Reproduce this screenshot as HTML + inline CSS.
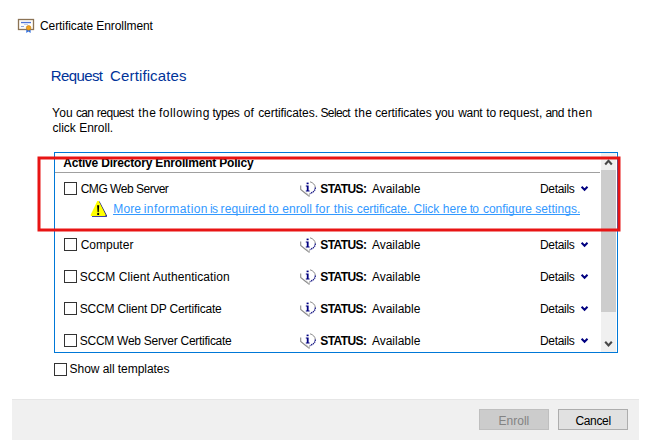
<!DOCTYPE html>
<html><head><meta charset="utf-8">
<style>
html,body{margin:0;padding:0;background:#fff;}
body{width:646px;height:444px;position:relative;overflow:hidden;font-family:"Liberation Sans",sans-serif;font-size:12px;color:#000;}
.t{position:absolute;white-space:nowrap;line-height:14px;}
.abs{position:absolute;}
.cb{position:absolute;width:11px;height:11px;border:1px solid #333;background:#fff;}
</style></head><body>
<!-- title icon -->
<svg class="abs" style="left:17px;top:17px" width="18" height="17" viewBox="0 0 18 17">
 <rect x="1.5" y="2.5" width="15" height="10" fill="#fffdf8" stroke="#8b7355" stroke-width="1.3"/>
 <rect x="4" y="4.9" width="10" height="1.3" fill="#4f74d6"/>
 <rect x="7" y="7" width="4" height="1" fill="#c5d0ea"/>
 <rect x="4" y="9" width="3" height="1" fill="#8fa6dc"/>
 <path d="M9.3 12 L9.3 16 L11.3 14.6 L13.6 16 L13.6 12Z" fill="#2f6fe0"/>
 <circle cx="11.6" cy="10.9" r="2.3" fill="#f2a31c" stroke="#c87f14" stroke-width="0.7"/>
</svg>
<!-- list box -->
<div class="abs" style="left:54px;top:152px;width:562px;height:199px;border:1px solid #0078d7;background:#fff;"></div>
<div class="abs" style="left:601px;top:153px;width:15px;height:199px;background:#f0f0f0;"></div>
<div class="abs" style="left:601px;top:170px;width:15px;height:142px;background:#cdcdcd;"></div>
<svg class="abs" style="left:601px;top:153px" width="15" height="199" viewBox="601 153 15 199">
<path d="M605.2 164.5 L608.5 160.8 L611.8 164.5" fill="none" stroke="#484848" stroke-width="2.1"/>
<path d="M605.2 341.7 L608.5 345.4 L611.8 341.7" fill="none" stroke="#484848" stroke-width="2.1"/>
</svg>
<div class="abs" style="left:55px;top:172px;width:545px;height:1px;background:#a0a0a0;"></div>
<div class="cb" style="left:64px;top:182px;"></div>
<svg class="abs" style="left:300px;top:181px" width="17" height="17" viewBox="0 0 17 17">
 <path d="M0.7 4.5 L0.7 8.5 L5 12 L9.3 15.3" fill="none" stroke="#8c8c8c" stroke-width="1.1"/>
 <path d="M10 0.8 C13 1.5 15.3 4 15.3 6.5" fill="none" stroke="#8c8c8c" stroke-width="1"/>
 <path d="M15.3 6.5 C15.3 9.5 13 11.5 10 12.5" fill="none" stroke="#101080" stroke-width="1.4" stroke-dasharray="1.3 0.7"/>
 <path d="M6 11.5 L9.5 15.5 L9.5 12" fill="none" stroke="#b0b0b0" stroke-width="0.8"/>
 <rect x="6.6" y="1.6" width="2" height="1.6" fill="#000080"/>
 <path d="M5.8 4.6 H8.6 V9.6 H9.6 V10.6 H5.8 V9.6 H6.8 V5.6 H5.8Z" fill="#000080"/>
</svg>
<svg class="abs" style="left:580px;top:186px" width="9" height="6" viewBox="0 0 9 6"><path d="M1.6 0.8 L4.55 3.8 L7.5 0.8" fill="none" stroke="#000080" stroke-width="2"/></svg>
<div class="cb" style="left:64px;top:238px;"></div>
<svg class="abs" style="left:300px;top:237px" width="17" height="17" viewBox="0 0 17 17">
 <path d="M0.7 4.5 L0.7 8.5 L5 12 L9.3 15.3" fill="none" stroke="#8c8c8c" stroke-width="1.1"/>
 <path d="M10 0.8 C13 1.5 15.3 4 15.3 6.5" fill="none" stroke="#8c8c8c" stroke-width="1"/>
 <path d="M15.3 6.5 C15.3 9.5 13 11.5 10 12.5" fill="none" stroke="#101080" stroke-width="1.4" stroke-dasharray="1.3 0.7"/>
 <path d="M6 11.5 L9.5 15.5 L9.5 12" fill="none" stroke="#b0b0b0" stroke-width="0.8"/>
 <rect x="6.6" y="1.6" width="2" height="1.6" fill="#000080"/>
 <path d="M5.8 4.6 H8.6 V9.6 H9.6 V10.6 H5.8 V9.6 H6.8 V5.6 H5.8Z" fill="#000080"/>
</svg>
<svg class="abs" style="left:580px;top:242px" width="9" height="6" viewBox="0 0 9 6"><path d="M1.6 0.8 L4.55 3.8 L7.5 0.8" fill="none" stroke="#000080" stroke-width="2"/></svg>
<div class="cb" style="left:64px;top:270px;"></div>
<svg class="abs" style="left:300px;top:269px" width="17" height="17" viewBox="0 0 17 17">
 <path d="M0.7 4.5 L0.7 8.5 L5 12 L9.3 15.3" fill="none" stroke="#8c8c8c" stroke-width="1.1"/>
 <path d="M10 0.8 C13 1.5 15.3 4 15.3 6.5" fill="none" stroke="#8c8c8c" stroke-width="1"/>
 <path d="M15.3 6.5 C15.3 9.5 13 11.5 10 12.5" fill="none" stroke="#101080" stroke-width="1.4" stroke-dasharray="1.3 0.7"/>
 <path d="M6 11.5 L9.5 15.5 L9.5 12" fill="none" stroke="#b0b0b0" stroke-width="0.8"/>
 <rect x="6.6" y="1.6" width="2" height="1.6" fill="#000080"/>
 <path d="M5.8 4.6 H8.6 V9.6 H9.6 V10.6 H5.8 V9.6 H6.8 V5.6 H5.8Z" fill="#000080"/>
</svg>
<svg class="abs" style="left:580px;top:274px" width="9" height="6" viewBox="0 0 9 6"><path d="M1.6 0.8 L4.55 3.8 L7.5 0.8" fill="none" stroke="#000080" stroke-width="2"/></svg>
<div class="cb" style="left:64px;top:302px;"></div>
<svg class="abs" style="left:300px;top:301px" width="17" height="17" viewBox="0 0 17 17">
 <path d="M0.7 4.5 L0.7 8.5 L5 12 L9.3 15.3" fill="none" stroke="#8c8c8c" stroke-width="1.1"/>
 <path d="M10 0.8 C13 1.5 15.3 4 15.3 6.5" fill="none" stroke="#8c8c8c" stroke-width="1"/>
 <path d="M15.3 6.5 C15.3 9.5 13 11.5 10 12.5" fill="none" stroke="#101080" stroke-width="1.4" stroke-dasharray="1.3 0.7"/>
 <path d="M6 11.5 L9.5 15.5 L9.5 12" fill="none" stroke="#b0b0b0" stroke-width="0.8"/>
 <rect x="6.6" y="1.6" width="2" height="1.6" fill="#000080"/>
 <path d="M5.8 4.6 H8.6 V9.6 H9.6 V10.6 H5.8 V9.6 H6.8 V5.6 H5.8Z" fill="#000080"/>
</svg>
<svg class="abs" style="left:580px;top:306px" width="9" height="6" viewBox="0 0 9 6"><path d="M1.6 0.8 L4.55 3.8 L7.5 0.8" fill="none" stroke="#000080" stroke-width="2"/></svg>
<div class="cb" style="left:64px;top:334px;"></div>
<svg class="abs" style="left:300px;top:333px" width="17" height="17" viewBox="0 0 17 17">
 <path d="M0.7 4.5 L0.7 8.5 L5 12 L9.3 15.3" fill="none" stroke="#8c8c8c" stroke-width="1.1"/>
 <path d="M10 0.8 C13 1.5 15.3 4 15.3 6.5" fill="none" stroke="#8c8c8c" stroke-width="1"/>
 <path d="M15.3 6.5 C15.3 9.5 13 11.5 10 12.5" fill="none" stroke="#101080" stroke-width="1.4" stroke-dasharray="1.3 0.7"/>
 <path d="M6 11.5 L9.5 15.5 L9.5 12" fill="none" stroke="#b0b0b0" stroke-width="0.8"/>
 <rect x="6.6" y="1.6" width="2" height="1.6" fill="#000080"/>
 <path d="M5.8 4.6 H8.6 V9.6 H9.6 V10.6 H5.8 V9.6 H6.8 V5.6 H5.8Z" fill="#000080"/>
</svg>
<svg class="abs" style="left:580px;top:338px" width="9" height="6" viewBox="0 0 9 6"><path d="M1.6 0.8 L4.55 3.8 L7.5 0.8" fill="none" stroke="#000080" stroke-width="2"/></svg>
<!-- warning -->
<svg class="abs" style="left:90px;top:200px" width="18" height="18" viewBox="0 0 18 18">
 <path d="M8.6 1.6 L9.6 1.6 L16.9 15.6 L16.9 16.8 L2 16.8 L2 16 Z" fill="#000080"/>
 <path d="M7.3 0.9 L8.8 0.9 L15.6 14.6 L15.6 15.9 L0.8 15.9 L0.8 14.6 Z" fill="#ffff00"/>
 <path d="M7.1 5.3 H9.2 L8.7 12.2 H7.6Z" fill="#000"/><rect x="7.2" y="13" width="1.9" height="1.9" rx="0.5" fill="#000"/>
</svg>
<!-- show all -->
<div class="cb" style="left:54px;top:363px;"></div>
<!-- footer -->
<div class="abs" style="left:12px;top:399px;width:627px;height:41px;background:#f0f0f0;border-top:1px solid #e6e6e6;box-sizing:border-box;"></div>
<div class="abs" style="left:479px;top:409px;width:68px;height:19px;border:1px solid #bfbfbf;background:#cccccc;"></div>
<div class="abs" style="left:558px;top:409px;width:68px;height:19px;border:1px solid #adadad;background:#e1e1e1;"></div>
<div class="t" id="title" style="left:40.00px;top:19.00px;font-size:12px;letter-spacing:-0.086px;">Certificate Enrollment</div>
<div class="t" id="h1_0" style="left:50.70px;top:69.00px;font-size:15px;letter-spacing:-0.600px;color:#003399;">Request</div>
<div class="t" id="h1_1" style="left:110.10px;top:69.00px;font-size:15px;letter-spacing:0.123px;color:#003399;">Certificates</div>
<div class="t" id="p1_0" style="left:52.05px;top:106.00px;font-size:12px;letter-spacing:0.225px;">You</div>
<div class="t" id="p1_1" style="left:76.00px;top:106.00px;font-size:12px;letter-spacing:-0.650px;">can</div>
<div class="t" id="p1_2" style="left:96.65px;top:106.00px;font-size:12px;letter-spacing:-0.450px;">request</div>
<div class="t" id="p1_3" style="left:138.25px;top:106.00px;font-size:12px;letter-spacing:0.450px;">the</div>
<div class="t" id="p1_4" style="left:159.05px;top:106.00px;font-size:12px;letter-spacing:0.450px;">following</div>
<div class="t" id="p1_5" style="left:212.45px;top:106.00px;font-size:12px;letter-spacing:-0.337px;">types</div>
<div class="t" id="p1_6" style="left:243.80px;top:106.00px;font-size:12px;letter-spacing:-0.040px;">of</div>
<div class="t" id="p1_7" style="left:258.20px;top:106.00px;font-size:12px;letter-spacing:-0.075px;">certificates.</div>
<div class="t" id="p1_8" style="left:320.50px;top:106.00px;font-size:12px;letter-spacing:-0.650px;">Select</div>
<div class="t" id="p1_9" style="left:354.40px;top:106.00px;font-size:12px;letter-spacing:0.410px;">the</div>
<div class="t" id="p1_10" style="left:375.20px;top:106.00px;font-size:12px;letter-spacing:-0.082px;">certificates</div>
<div class="t" id="p1_11" style="left:435.20px;top:106.00px;font-size:12px;letter-spacing:-0.225px;">you</div>
<div class="t" id="p1_12" style="left:458.15px;top:106.00px;font-size:12px;letter-spacing:-0.300px;">want</div>
<div class="t" id="p1_13" style="left:486.25px;top:106.00px;font-size:12px;letter-spacing:-0.110px;">to</div>
<div class="t" id="p1_14" style="left:498.90px;top:106.00px;font-size:12px;letter-spacing:0.000px;">request,</div>
<div class="t" id="p1_15" style="left:545.60px;top:106.00px;font-size:12px;letter-spacing:-0.650px;">and</div>
<div class="t" id="p1_16" style="left:567.40px;top:106.00px;font-size:12px;letter-spacing:0.500px;">then</div>
<div class="t" id="p2" style="left:52.50px;top:121.00px;font-size:12px;letter-spacing:0.000px;">click Enroll.</div>
<div class="t" id="hdr" style="left:63.20px;top:156.00px;font-size:12px;letter-spacing:-0.191px;font-weight:bold;">Active Directory Enrollment Policy</div>
<div class="t" id="r0" style="left:80.70px;top:182.00px;font-size:12px;letter-spacing:-0.485px;">CMG Web Server</div>
<div class="t" id="st0" style="left:320.30px;top:182.00px;font-size:12px;letter-spacing:-0.600px;font-weight:bold;">STATUS:</div>
<div class="t" id="av0" style="left:371.90px;top:182.00px;font-size:12px;letter-spacing:0.000px;">Available</div>
<div class="t" id="dt0" style="left:539.90px;top:182.00px;font-size:12px;letter-spacing:-0.300px;">Details</div>
<div class="t" id="r1" style="left:80.70px;top:238.00px;font-size:12px;letter-spacing:-0.000px;">Computer</div>
<div class="t" id="st1" style="left:320.30px;top:238.00px;font-size:12px;letter-spacing:-0.600px;font-weight:bold;">STATUS:</div>
<div class="t" id="av1" style="left:371.90px;top:238.00px;font-size:12px;letter-spacing:0.000px;">Available</div>
<div class="t" id="dt1" style="left:539.90px;top:238.00px;font-size:12px;letter-spacing:-0.300px;">Details</div>
<div class="t" id="r2" style="left:79.80px;top:270.00px;font-size:12px;letter-spacing:0.072px;">SCCM Client Authentication</div>
<div class="t" id="st2" style="left:320.30px;top:270.00px;font-size:12px;letter-spacing:-0.600px;font-weight:bold;">STATUS:</div>
<div class="t" id="av2" style="left:371.90px;top:270.00px;font-size:12px;letter-spacing:0.000px;">Available</div>
<div class="t" id="dt2" style="left:539.90px;top:270.00px;font-size:12px;letter-spacing:-0.300px;">Details</div>
<div class="t" id="r3" style="left:79.80px;top:302.00px;font-size:12px;letter-spacing:-0.180px;">SCCM Client DP Certificate</div>
<div class="t" id="st3" style="left:320.30px;top:302.00px;font-size:12px;letter-spacing:-0.600px;font-weight:bold;">STATUS:</div>
<div class="t" id="av3" style="left:371.90px;top:302.00px;font-size:12px;letter-spacing:0.000px;">Available</div>
<div class="t" id="dt3" style="left:539.90px;top:302.00px;font-size:12px;letter-spacing:-0.300px;">Details</div>
<div class="t" id="r4" style="left:79.80px;top:334.00px;font-size:12px;letter-spacing:-0.277px;">SCCM Web Server Certificate</div>
<div class="t" id="st4" style="left:320.30px;top:334.00px;font-size:12px;letter-spacing:-0.600px;font-weight:bold;">STATUS:</div>
<div class="t" id="av4" style="left:371.90px;top:334.00px;font-size:12px;letter-spacing:0.000px;">Available</div>
<div class="t" id="dt4" style="left:539.90px;top:334.00px;font-size:12px;letter-spacing:-0.300px;">Details</div>
<div class="t" id="link_0" style="left:113.25px;top:202.00px;font-size:12px;letter-spacing:0.150px;color:#3399ff;">More</div>
<div class="t" id="link_1" style="left:143.70px;top:202.00px;font-size:12px;letter-spacing:0.450px;color:#3399ff;">information</div>
<div class="t" id="link_2" style="left:210.10px;top:202.00px;font-size:12px;letter-spacing:-0.650px;color:#3399ff;">is</div>
<div class="t" id="link_3" style="left:220.50px;top:202.00px;font-size:12px;letter-spacing:0.129px;color:#3399ff;">required</div>
<div class="t" id="link_4" style="left:268.60px;top:202.00px;font-size:12px;letter-spacing:-0.040px;color:#3399ff;">to</div>
<div class="t" id="link_5" style="left:282.20px;top:202.00px;font-size:12px;letter-spacing:0.090px;color:#3399ff;">enroll</div>
<div class="t" id="link_6" style="left:315.25px;top:202.00px;font-size:12px;letter-spacing:0.225px;color:#3399ff;">for</div>
<div class="t" id="link_7" style="left:333.80px;top:202.00px;font-size:12px;letter-spacing:0.200px;color:#3399ff;">this</div>
<div class="t" id="link_8" style="left:356.85px;top:202.00px;font-size:12px;letter-spacing:-0.123px;color:#3399ff;">certificate.</div>
<div class="t" id="link_9" style="left:413.60px;top:202.00px;font-size:12px;letter-spacing:-0.113px;color:#3399ff;">Click</div>
<div class="t" id="link_10" style="left:442.85px;top:202.00px;font-size:12px;letter-spacing:0.000px;color:#3399ff;">here</div>
<div class="t" id="link_11" style="left:469.65px;top:202.00px;font-size:12px;letter-spacing:-0.650px;color:#3399ff;">to</div>
<div class="t" id="link_12" style="left:483.00px;top:202.00px;font-size:12px;letter-spacing:-0.056px;color:#3399ff;">configure</div>
<div class="t" id="link_13" style="left:535.25px;top:202.00px;font-size:12px;letter-spacing:0.056px;color:#3399ff;">settings.</div>
<div class="t" id="show" style="left:69.60px;top:362.00px;font-size:12px;letter-spacing:-0.053px;">Show all templates</div>
<div class="t" id="enroll" style="left:498.60px;top:414.00px;font-size:12px;letter-spacing:-0.000px;color:#838383;">Enroll</div>
<div class="t" id="cancel" style="left:575.50px;top:414.00px;font-size:12px;letter-spacing:-0.360px;">Cancel</div>
<div class="abs" style="left:113px;top:214px;width:467px;height:1px;background:#3399ff;"></div>
<!-- red highlight -->
<svg class="abs" style="left:30px;top:150px" width="600" height="90" viewBox="30 150 600 90"><rect x="39" y="158" width="580" height="72" fill="none" stroke="#e81414" stroke-width="3"/></svg>
</body></html>
